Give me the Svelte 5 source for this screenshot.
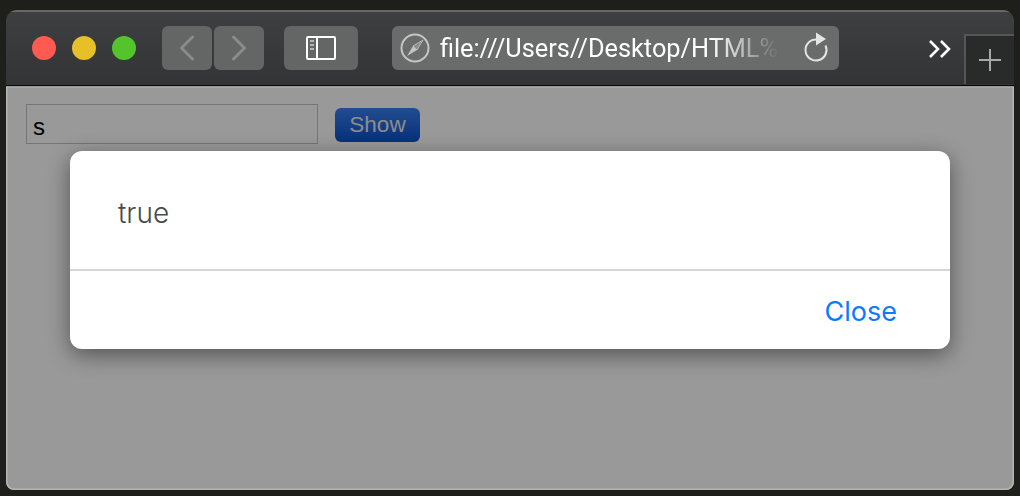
<script lang="ts">
  let value = $state('s');
  const url = 'file:///Users//Desktop/HTML%';
</script>

<div class="window">
  <header class="toolbar">
    <div class="lights">
      <span class="light red"></span>
      <span class="light yellow"></span>
      <span class="light green"></span>
    </div>
    <div class="nav">
      <button class="tool nav-btn" aria-label="Back">
        <svg width="16" height="26" viewBox="0 0 16 26"><path d="M13.5 2 L2.5 13 L13.5 24" /></svg>
      </button>
      <button class="tool nav-btn" aria-label="Forward">
        <svg width="16" height="26" viewBox="0 0 16 26"><path d="M2.5 2 L13.5 13 L2.5 24" /></svg>
      </button>
    </div>
    <button class="tool sidebar-btn" aria-label="Sidebar">
      <svg width="30" height="24" viewBox="0 0 30 24">
        <rect class="frame" x="1" y="1" width="28" height="22" rx="1" />
        <path class="frame" d="M11 1 V23" />
        <path class="ticks" d="M4 5 H8 M4 9 H8 M4 13 H8" />
      </svg>
    </button>
    <div class="address">
      <svg class="compass" width="30" height="30" viewBox="0 0 30 30">
        <circle cx="15" cy="15" r="13.5" />
        <path class="needle-a" d="M23 7 L13 13 L17 17 Z" />
        <path class="needle-b" d="M7 23 L13 13 L17 17 Z" />
      </svg>
      <span class="url">{url}</span>
      <svg class="reload" width="26" height="32" viewBox="0 0 26 32">
        <path class="arc" d="M13 7.5 A10.5 10.5 0 1 0 22.5 13.5" />
        <path class="head" d="M13 0.5 L23 7 L13 13.5 Z" />
      </svg>
    </div>
    <svg class="more" width="24" height="20" viewBox="0 0 24 20">
      <path d="M2 2 L10 10 L2 18 M13 2 L21 10 L13 18" />
    </svg>
    <div class="new-tab">
      <svg width="24" height="24" viewBox="0 0 24 24"><path d="M12 1 V23 M1 12 H23" /></svg>
    </div>
  </header>

  <main class="page">
    <div class="form">
      <input class="field" bind:value />
      <button class="show">Show</button>
    </div>

    <div class="backdrop">
      <div class="dialog">
        <div class="dialog-body">true</div>
        <div class="dialog-footer">
          <button class="close">Close</button>
        </div>
      </div>
    </div>
  </main>
</div>

<style>
  :global(body) {
    margin: 0;
    background: #1e1f1a;
    overflow: hidden;
  }
  .window {
    box-sizing: border-box;
    width: 1008px;
    height: 480px;
    margin: 10px 0 0 6px;
    border-radius: 11px 11px 8px 8px;
    overflow: hidden;
    display: flex;
    flex-direction: column;
    font-family: Inter, 'Liberation Sans', sans-serif;
    position: relative;
  }
  .toolbar {
    box-sizing: border-box;
    height: 76px;
    flex-shrink: 0;
    display: flex;
    align-items: flex-start;
    background: linear-gradient(#3e3f41, #333436);
    border-top: 2px solid #666767;
    border-bottom: 1px solid #0a0a0a;
    position: relative;
  }
  .lights {
    display: flex;
    gap: 16px;
    margin: 24px 0 0 26px;
  }
  .light {
    width: 24px;
    height: 24px;
    border-radius: 50%;
  }
  .red { background: #ff5a52; }
  .yellow { background: #e6bf29; }
  .green { background: #53c42c; }
  .tool {
    border: none;
    padding: 0;
    height: 44px;
    border-radius: 6px;
    background: #646565;
    display: flex;
    align-items: center;
    justify-content: center;
  }
  .nav {
    display: flex;
    gap: 2px;
    margin: 14px 0 0 26px;
  }
  .nav-btn {
    width: 50px;
  }
  .nav-btn path {
    fill: none;
    stroke: #8b8b8b;
    stroke-width: 3;
    stroke-linecap: round;
    stroke-linejoin: round;
  }
  .sidebar-btn {
    width: 74px;
    margin: 14px 0 0 20px;
  }
  .frame {
    fill: none;
    stroke: #fff;
    stroke-width: 2;
  }
  .ticks {
    fill: none;
    stroke: #b5b5b5;
    stroke-width: 2;
  }
  .address {
    box-sizing: border-box;
    width: 448px;
    height: 44px;
    margin: 14px 0 0 34px;
    padding-left: 8px;
    border-radius: 6px;
    background: #6a6b6b;
    display: flex;
    align-items: center;
    position: relative;
  }
  .compass {
    flex-shrink: 0;
  }
  .compass circle {
    fill: none;
    stroke: #c4c4c4;
    stroke-width: 2;
  }
  .needle-a { fill: #8f8f8f; stroke: #c4c4c4; stroke-width: 0.8; }
  .needle-b { fill: #c4c4c4; }
  .url {
    margin-left: 10px;
    width: 340px;
    font-family: Roboto, Inter, sans-serif;
    font-size: 25.3px;
    color: #fff;
    white-space: nowrap;
    overflow: hidden;
    mask-image: linear-gradient(to right, #000 80%, transparent 100%);
  }
  .reload {
    position: absolute;
    left: 411px;
    top: 6px;
  }
  .arc {
    fill: none;
    stroke: #e4e4e4;
    stroke-width: 2;
  }
  .head {
    fill: #e4e4e4;
  }
  .more {
    margin: 27px 0 0 89px;
  }
  .more path {
    fill: none;
    stroke: #fff;
    stroke-width: 2.6;
  }
  .new-tab {
    box-sizing: border-box;
    width: 50px;
    height: 50px;
    margin: 22px 0 0 12px;
    background: #292a2a;
    border-left: 2px solid #565656;
    border-top: 2px solid #565656;
    display: flex;
    align-items: center;
    justify-content: center;
  }
  .new-tab path {
    fill: none;
    stroke: #a8a8a8;
    stroke-width: 2;
  }
  .page {
    flex: 1;
    position: relative;
    background: #fff;
    box-sizing: border-box;
    padding: 18px 0 0 20px;
  }
  .page::after {
    content: '';
    position: absolute;
    inset: 0;
    border-radius: 0 0 8px 8px;
    box-shadow: inset 0 0 0 1.5px #b4b4b4;
    clip-path: inset(1px 0 0 0);
    pointer-events: none;
  }
  .form {
    display: flex;
    align-items: center;
    gap: 17px;
  }
  .field {
    box-sizing: border-box;
    width: 292px;
    height: 40px;
    padding: 6px 6px 0;
    border: 1px solid #c4c4c4;
    background: #fff;
    color: #000;
    font-family: 'Liberation Sans', sans-serif;
    font-size: 24px;
    outline: none;
  }
  .show {
    width: 85px;
    height: 34px;
    margin-top: 2px;
    padding: 0;
    border: none;
    border-radius: 6px;
    background: linear-gradient(#3b7ff0, #0a52cf);
    color: #e8e8e8;
    font-family: 'Liberation Sans', sans-serif;
    font-size: 22.5px;
  }
  .backdrop {
    position: absolute;
    inset: 0;
    box-sizing: border-box;
    padding: 65px 64px 0;
    background: rgba(0, 0, 0, 0.4);
  }
  .dialog {
    height: 198px;
    border-radius: 12px;
    background: #fff;
    box-shadow: 0 6px 22px rgba(0, 0, 0, 0.45);
    display: flex;
    flex-direction: column;
  }
  .dialog-body {
    box-sizing: border-box;
    height: 120px;
    padding: 46px 48px 0;
    font-size: 28px;
    font-weight: 300;
    line-height: 33px;
    color: #4a4a4a;
    border-bottom: 2px solid #d6d6d6;
  }
  .dialog-footer {
    flex: 1;
    display: flex;
    align-items: center;
    justify-content: flex-end;
    padding: 2px 53px 0 0;
  }
  .close {
    border: none;
    padding: 0;
    background: none;
    font-family: Inter, sans-serif;
    font-size: 27px;
    color: #0a7aff;
  }
</style>
